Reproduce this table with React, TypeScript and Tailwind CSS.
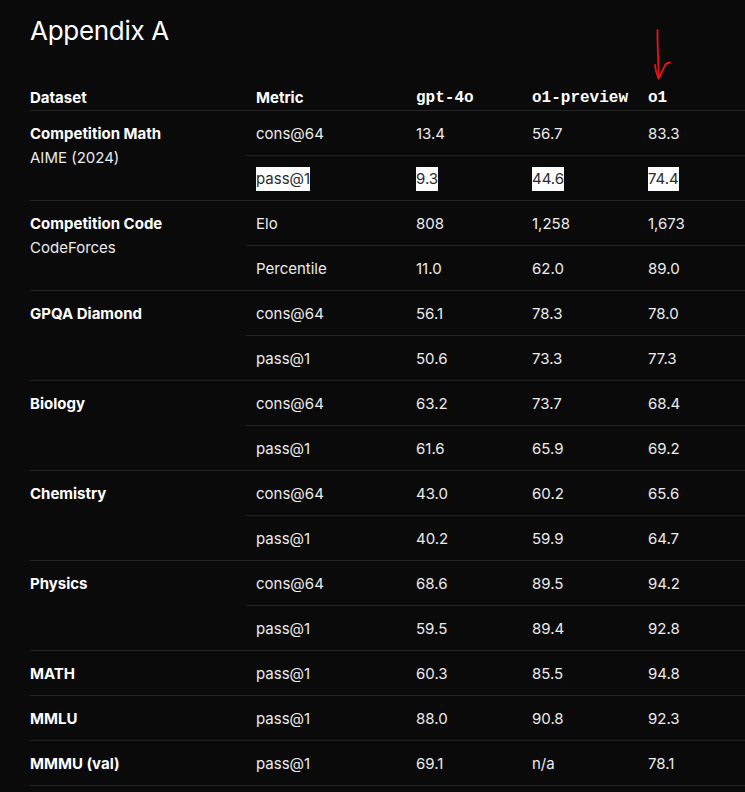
import React from "react";

type Row = { metric: string; v: [string, string, string]; hl?: boolean };
type Group = { name: string; sub?: string; rows: Row[] };

const groups: Group[] = [
  {
    name: "Competition Math",
    sub: "AIME (2024)",
    rows: [
      { metric: "cons@64", v: ["13.4", "56.7", "83.3"] },
      { metric: "pass@1", v: ["9.3", "44.6", "74.4"], hl: true },
    ],
  },
  {
    name: "Competition Code",
    sub: "CodeForces",
    rows: [
      { metric: "Elo", v: ["808", "1,258", "1,673"] },
      { metric: "Percentile", v: ["11.0", "62.0", "89.0"] },
    ],
  },
  {
    name: "GPQA Diamond",
    rows: [
      { metric: "cons@64", v: ["56.1", "78.3", "78.0"] },
      { metric: "pass@1", v: ["50.6", "73.3", "77.3"] },
    ],
  },
  {
    name: "Biology",
    rows: [
      { metric: "cons@64", v: ["63.2", "73.7", "68.4"] },
      { metric: "pass@1", v: ["61.6", "65.9", "69.2"] },
    ],
  },
  {
    name: "Chemistry",
    rows: [
      { metric: "cons@64", v: ["43.0", "60.2", "65.6"] },
      { metric: "pass@1", v: ["40.2", "59.9", "64.7"] },
    ],
  },
  {
    name: "Physics",
    rows: [
      { metric: "cons@64", v: ["68.6", "89.5", "94.2"] },
      { metric: "pass@1", v: ["59.5", "89.4", "92.8"] },
    ],
  },
  { name: "MATH", rows: [{ metric: "pass@1", v: ["60.3", "85.5", "94.8"] }] },
  { name: "MMLU", rows: [{ metric: "pass@1", v: ["88.0", "90.8", "92.3"] }] },
  { name: "MMMU (val)", rows: [{ metric: "pass@1", v: ["69.1", "n/a", "78.1"] }] },
];

const td = "border-b border-[#242424] pl-[10px] pt-[11px] pb-[9px] align-top leading-[24px] whitespace-nowrap";

function Cell({ text, hl }: { text: string; hl?: boolean }) {
  return (
    <td className={td}>
      {hl ? (
        <span className="inline-block bg-white align-top leading-[24px] text-[#2b2b2b]">{text}</span>
      ) : (
        text
      )}
    </td>
  );
}

export default function App() {
  return (
    <div
      className="relative min-h-[792px] w-full overflow-hidden bg-[#0a0a0a] text-[#ececec]"
      style={{ fontFamily: "Inter, 'Noto Sans', sans-serif" }}
    >
      <div className="pl-[30px] pt-[16px]">
        <h1 className="mb-[29px] text-[26px] font-normal leading-[30px] tracking-[-0.3px] text-white">
          Appendix A
        </h1>
        <table className="w-[715px] table-fixed border-collapse text-[15px]">
          <colgroup>
            <col className="w-[216px]" />
            <col className="w-[160px]" />
            <col className="w-[116px]" />
            <col className="w-[116px]" />
            <col />
          </colgroup>
          <thead>
            <tr className="text-left font-bold text-white">
              <th className="border-b border-[#242424] pt-[11px] pb-0 text-left leading-[24px] font-bold">
                Dataset
              </th>
              <th className="border-b border-[#242424] pl-[10px] pt-[11px] pb-0 text-left leading-[24px] font-bold">
                Metric
              </th>
              {["gpt-4o", "o1-preview", "o1"].map((h) => (
                <th
                  key={h}
                  className="border-b border-[#242424] pl-[10px] pt-[11px] pb-0 text-left text-[16px] leading-[24px] font-bold"
                  style={{ fontFamily: "'Liberation Mono', monospace" }}
                >
                  {h}
                </th>
              ))}
            </tr>
          </thead>
          <tbody>
            {groups.map((g) =>
              g.rows.map((r, i) => (
                <tr key={g.name + r.metric}>
                  {i === 0 && (
                    <td
                      rowSpan={g.rows.length}
                      className="border-b border-[#242424] pt-[11px] pb-[9px] align-top leading-[24px] whitespace-nowrap"
                    >
                      <div className="font-bold text-white">{g.name}</div>
                      {g.sub && <div>{g.sub}</div>}
                    </td>
                  )}
                  <Cell text={r.metric} hl={r.hl} />
                  {r.v.map((v, k) => (
                    <Cell key={k} text={v} hl={r.hl} />
                  ))}
                </tr>
              ))
            )}
          </tbody>
        </table>
      </div>
      <svg
        className="absolute left-[648px] top-[26px]"
        width="30"
        height="60"
        viewBox="0 0 30 60"
        fill="none"
        stroke="#e8131b"
        strokeWidth="1.8"
        strokeLinecap="round"
        strokeLinejoin="round"
      >
        <path d="M9.5 4 C9.2 16 10.2 30 10.8 52" />
        <path d="M7 39 C7.5 45 8.8 49 10.6 52.5 C13 49 15 43 17.5 38.5 C19 37 20.5 36.5 22 36.5" />
      </svg>
    </div>
  );
}
